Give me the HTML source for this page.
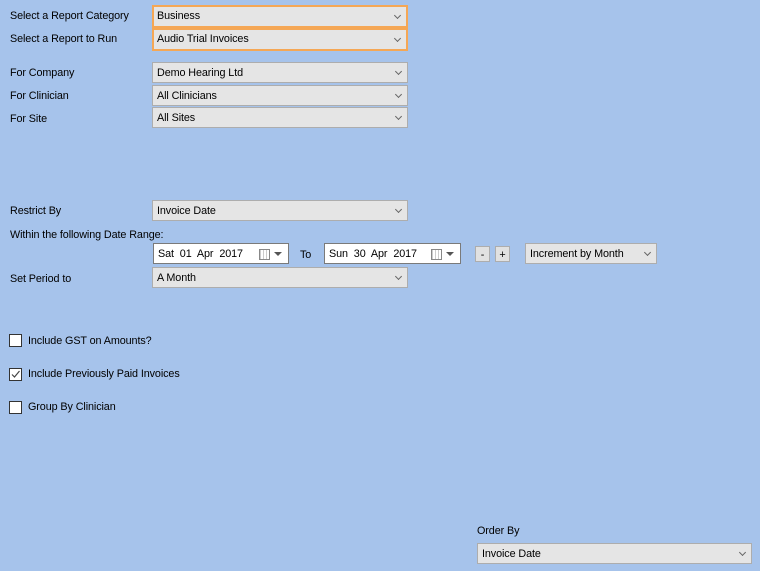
<!DOCTYPE html><html><head><style>
body{margin:0;width:760px;height:571px;background:#a6c3eb;font-family:"Liberation Sans",sans-serif;font-size:10.8px;letter-spacing:-0.1px;color:#000;position:relative;overflow:hidden}
.a{position:absolute;white-space:nowrap}
.cb{position:absolute;box-sizing:border-box;background:#e5e5e5;border:1px solid #adadad;height:21px;line-height:21px;padding-left:4px}
.cb.o{border:2px solid #f5a755;padding-left:3px;line-height:19px}
.cb:after{content:"";position:absolute;right:6px;top:6px;width:4px;height:4px;border-right:1px solid #666;border-bottom:1px solid #666;transform:rotate(45deg)}
.dt{position:absolute;box-sizing:border-box;background:#fff;border:1px solid #7a7a7a;height:21px;line-height:20px;padding-left:4px;word-spacing:3px}
.cal{position:absolute;right:18px;top:5px;width:9px;height:9px;border:1px solid #888;background:repeating-linear-gradient(90deg,#ccc 0 1px,#fff 1px 3px)}
.ar{position:absolute;right:6px;top:8px;border-left:4px solid transparent;border-right:4px solid transparent;border-top:4px solid #555}
.bt{position:absolute;box-sizing:border-box;background:#e1e1e1;border:1px solid #adadad;width:15px;height:16px;text-align:center;line-height:16px}
.ch{position:absolute;box-sizing:border-box;width:13px;height:13px;border:1px solid #333;background:#fff}
</style></head><body>
<div class="a" style="left:10px;top:10px">Select a Report Category</div>
<div class="a" style="left:10px;top:33px">Select a Report to Run</div>
<div class="a" style="left:10px;top:67px">For Company</div>
<div class="a" style="left:10px;top:90px">For Clinician</div>
<div class="a" style="left:10px;top:113px">For Site</div>
<div class="a" style="left:10px;top:205px">Restrict By</div>
<div class="a" style="left:10px;top:229px">Within the following Date Range:</div>
<div class="a" style="left:10px;top:273px">Set Period to</div>
<div class="cb o" style="left:152px;top:5px;width:256px;height:23px">Business</div>
<div class="cb o" style="left:152px;top:28px;width:256px;height:23px">Audio Trial Invoices</div>
<div class="cb" style="left:152px;top:62px;width:256px">Demo Hearing Ltd</div>
<div class="cb" style="left:152px;top:85px;width:256px">All Clinicians</div>
<div class="cb" style="left:152px;top:107px;width:256px">All Sites</div>
<div class="cb" style="left:152px;top:200px;width:256px">Invoice Date</div>
<div class="dt" style="left:153px;top:243px;width:136px">Sat 01 Apr 2017<span class="cal"></span><span class="ar"></span></div>
<div class="a" style="left:300px;top:249px">To</div>
<div class="dt" style="left:324px;top:243px;width:137px">Sun 30 Apr 2017<span class="cal"></span><span class="ar"></span></div>
<div class="bt" style="left:475px;top:246px">-</div>
<div class="bt" style="left:495px;top:246px">+</div>
<div class="cb" style="left:525px;top:243px;width:132px">Increment by Month</div>
<div class="cb" style="left:152px;top:267px;width:256px">A Month</div>
<div class="ch" style="left:9px;top:334px"></div><div class="a" style="left:28px;top:335px">Include GST on Amounts?</div>
<div class="ch" style="left:9px;top:368px"><svg width="11" height="11" style="position:absolute;left:0;top:0"><path d="M2 5.5L4.5 8L9.5 2" stroke="#444" stroke-width="1.2" fill="none"/></svg></div><div class="a" style="left:28px;top:368px">Include Previously Paid Invoices</div>
<div class="ch" style="left:9px;top:401px"></div><div class="a" style="left:28px;top:401px">Group By Clinician</div>
<div class="a" style="left:477px;top:525px">Order By</div>
<div class="cb" style="left:477px;top:543px;width:275px">Invoice Date</div>
</body></html>
